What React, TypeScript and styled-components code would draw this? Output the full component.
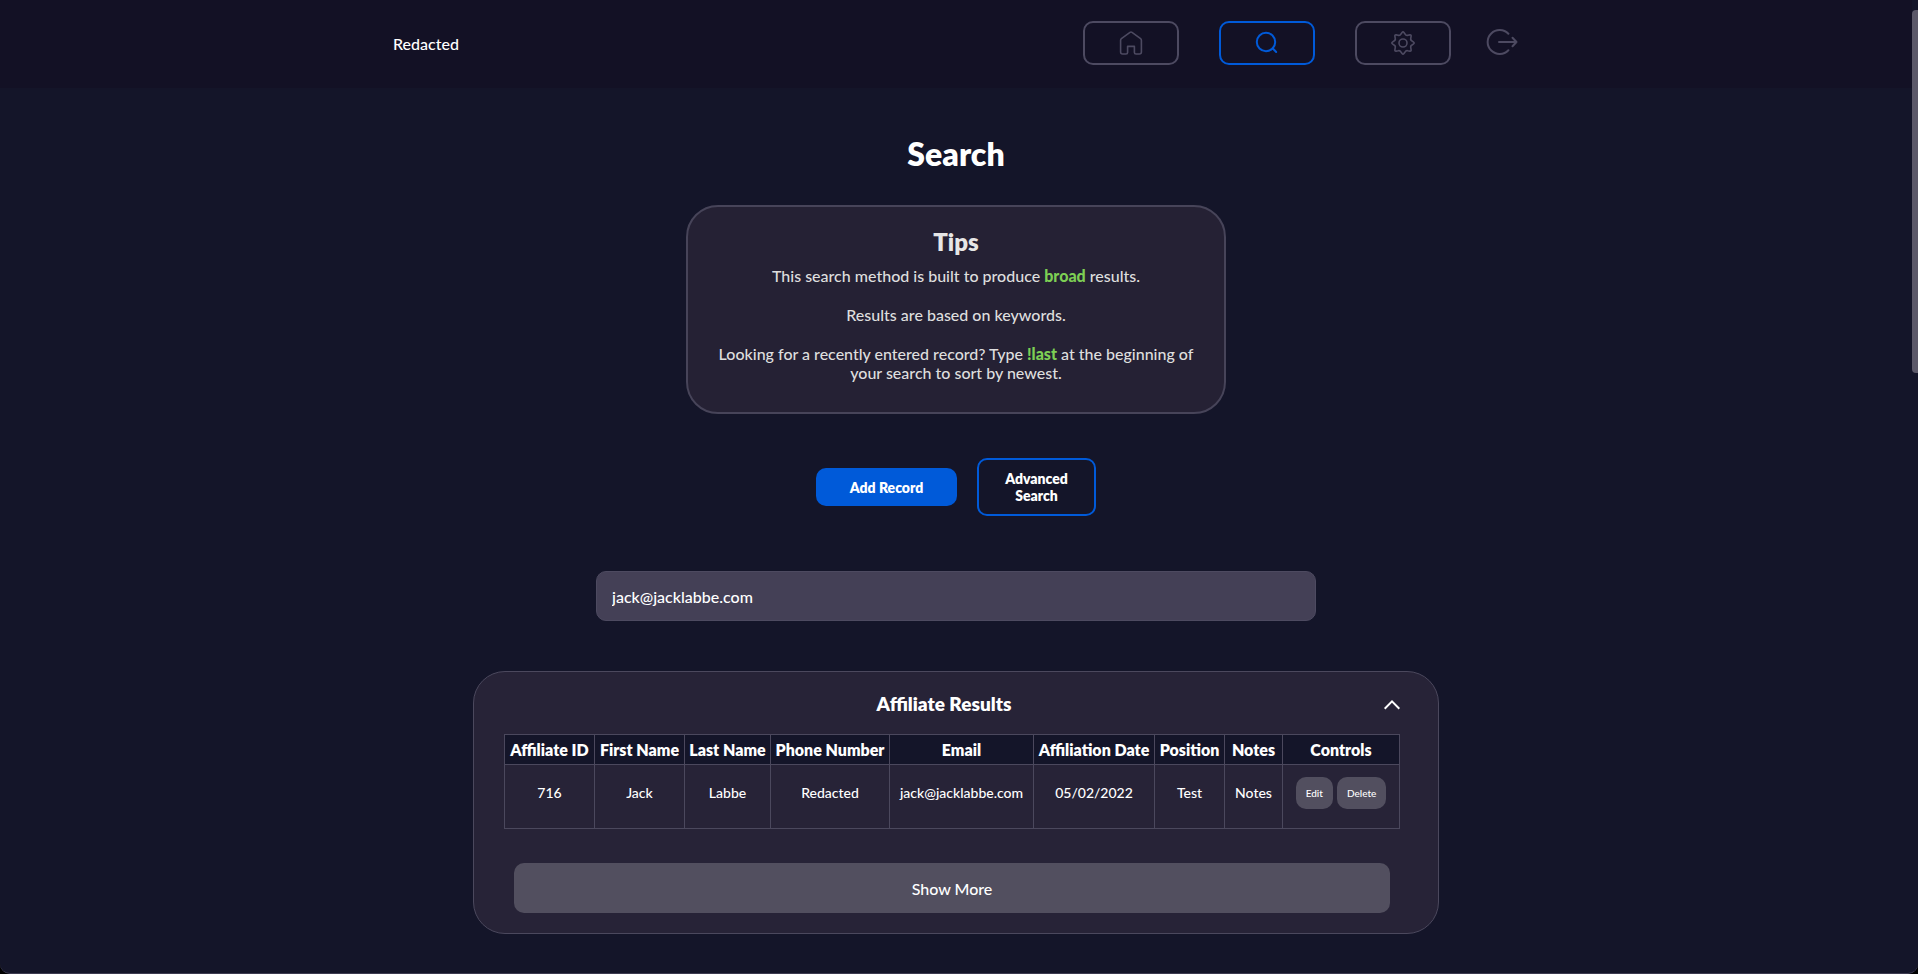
import React, { useState } from "react";
import styled, { createGlobalStyle, css } from "styled-components";

const GlobalStyle = createGlobalStyle`
  *, *::before, *::after { box-sizing: border-box; }
  body { margin: 0; background: #000; font-family: Lato, "Open Sans", sans-serif; font-weight: 500; color: #fff; }
  button, input { font-family: inherit; font-weight: inherit; color: inherit; }
  button { cursor: pointer; }
  h1, h2, h3, p { margin: 0; }
`;

const Frame = styled.div`
  display: grid;
  grid-template-columns: minmax(0, 1fr) 6px;
  min-height: 100vh;
  overflow: hidden;
  background: #141529;
  border-bottom: 1px solid #3d3b50;
  border-radius: 0 0 10px 10px;
`;

const ScrollTrack = styled.div`
  padding-top: 10px;
`;

const ScrollThumb = styled.div`
  height: 363px;
  border-radius: 4px 0 0 4px;
  background: #5c5969;
`;

const Header = styled.header`
  height: 88px;
  padding: 0 24px;
  background: #131125;
`;

const HeaderInner = styled.div`
  display: flex;
  align-items: center;
  justify-content: space-between;
  max-width: 1126px;
  height: 86px;
  margin: 0 auto;
`;

const Brand = styled.span`
  padding-top: 2px;
  font-size: 16px;
  line-height: 20px;
`;

const Nav = styled.nav`
  display: flex;
  align-items: center;
  gap: 40px;
`;

const NavLink = styled.a<{ $active?: boolean }>`
  display: flex;
  align-items: center;
  justify-content: center;
  width: 96px;
  height: 44px;
  border: 2px solid currentColor;
  border-radius: 10px;
  color: ${(p) => (p.$active ? "#005ad9" : "#4d4a61")};
`;

const LogoutButton = styled.button`
  display: flex;
  padding: 0;
  margin-left: -5px;
  border: 0;
  background: none;
  color: #4d4a61;
`;

const Main = styled.main`
  display: flex;
  flex-direction: column;
  align-items: center;
  padding: 46px 24px 36px;
`;

const PageTitle = styled.h1`
  font-size: 32px;
  line-height: 40px;
  font-weight: 800;
`;

const TipsCard = styled.section`
  width: 100%;
  max-width: 540px;
  margin-top: 31px;
  padding: 20px 24px 30px;
  border: 2px solid #474459;
  border-radius: 32px;
  background: #252134;
  color: #dedede;
  text-align: center;
`;

const TipsTitle = styled.h2`
  margin-bottom: 9px;
  font-size: 24px;
  line-height: 30px;
  font-weight: 800;
  color: #e6e6e6;
`;

const Tip = styled.p`
  font-size: 16px;
  line-height: 19px;

  & + & { margin-top: 20px; }
`;

const Keyword = styled.strong`
  line-height: 1;
  font-weight: 900;
  color: #7dcf54;
`;

const Actions = styled.div`
  display: flex;
  align-items: center;
  gap: 20px;
  margin-top: 44px;
`;

const ActionButton = styled.button<{ $outlined?: boolean }>`
  padding: 10px 20px;
  border-radius: 10px;
  font-size: 14px;
  line-height: 17px;
  font-weight: 800;
  ${(p) =>
    p.$outlined
      ? css`
          width: 119px;
          border: 2px solid #005ad9;
          background: transparent;
        `
      : css`
          width: 141px;
          height: 38px;
          border: 0;
          background: #005ad9;
        `}
`;

const SearchInput = styled.input`
  width: 100%;
  max-width: 720px;
  height: 50px;
  margin-top: 55px;
  padding: 0 15px;
  border: 1px solid #4d4a60;
  border-radius: 10px;
  background: #444056;
  font-size: 16px;
  outline: none;
`;

const ResultsCard = styled.section`
  width: 100%;
  max-width: 966px;
  margin-top: 50px;
  padding: 20px 38px 20px 30px;
  border: 1px solid #4b485d;
  border-radius: 32px;
  background: #272337;
`;

const ResultsHeader = styled.div`
  display: flex;
  align-items: center;
  margin-bottom: 18px;
`;

const ResultsTitle = styled.h3`
  flex: 1;
  font-size: 19px;
  line-height: 24px;
  font-weight: 800;
  text-align: center;
`;

const CollapseButton = styled.button`
  display: flex;
  padding: 0;
  border: 0;
  background: none;
`;

const Table = styled.table`
  width: 100%;
  border-collapse: collapse;
  table-layout: fixed;
  text-align: center;
`;

const HeadCell = styled.th<{ $w: number }>`
  width: ${(p) => p.$w}px;
  height: 30px;
  padding: 0;
  border: 1px solid #4b485d;
  background: #141529;
  font-size: 16px;
  line-height: 20px;
  font-weight: 800;
  white-space: nowrap;
`;

const Cell = styled.td`
  height: 64px;
  padding: 12px 0 19px;
  border: 1px solid #4b485d;
  font-size: 14px;
  line-height: 16px;
`;

const RowControls = styled.div`
  display: flex;
  justify-content: center;
  gap: 4px;
`;

const RowButton = styled.button`
  height: 32px;
  padding: 0 10px;
  border: 0;
  border-radius: 10px;
  background: #524f5f;
  font-size: 10px;
`;

const MoreButton = styled.button`
  display: block;
  width: calc(100% - 20px);
  height: 50px;
  margin: 34px auto 0;
  border: 0;
  border-radius: 10px;
  background: #524f5f;
  font-size: 16px;
`;

const HomeIcon = () => (
  <svg width="24" height="24" viewBox="0 0 24 24" fill="none" stroke="currentColor" strokeWidth="1.6" strokeLinejoin="round" aria-hidden="true">
    <path d="M1.6 9.2q0-1 .8-1.6L11 1.4q1-.7 2 0l8.600 6.200q.8.6.8 1.600V21q0 2-2 2H17q-1.600 0-1.600-1.600V15.400H8.600v6q0 1.600-1.600 1.600H3.600q-2 0-2-2Z" />
  </svg>
);

const SearchIcon = () => (
  <svg width="24" height="24" viewBox="0 0 24 24" fill="none" stroke="currentColor" strokeWidth="2" strokeLinecap="round" aria-hidden="true">
    <circle cx="11" cy="11" r="9.200" />
    <path d="M17.600 17.200L21.200 21" />
  </svg>
);

const toothPoint = (radius: number, degrees: number) => {
  const a = (degrees * Math.PI) / 180;
  return `${(12 + radius * Math.sin(a)).toFixed(2)} ${(12 - radius * Math.cos(a)).toFixed(2)}`;
};

const gearPath =
  `M${toothPoint(10.6, -5)}` +
  Array.from({ length: 8 }, (_, i) => {
    const t = i * 45;
    return `Q${toothPoint(11.8, t)} ${toothPoint(10.6, t + 5)}L${toothPoint(9.2, t + 13)}Q${toothPoint(7.8, t + 22.5)} ${toothPoint(9.2, t + 32)}L${toothPoint(10.6, t + 40)}`;
  }).join("") +
  "Z";

const GearIcon = () => (
  <svg width="24" height="24" viewBox="0 0 24 24" fill="none" stroke="currentColor" strokeWidth="1.6" strokeLinejoin="round" aria-hidden="true">
    <path d={gearPath} />
    <circle cx="12" cy="12" r="4" />
  </svg>
);

const LogoutIcon = () => (
  <svg width="33" height="28" viewBox="0 1 33 28" fill="none" stroke="currentColor" strokeWidth="2" strokeLinecap="round" strokeLinejoin="round" aria-hidden="true">
    <path d="M22.400 5.800A12 12 0 1 0 22.400 22.200" />
    <path d="M13 14H30.500M26.500 9.800L30.500 14L26.500 18.200" />
  </svg>
);

const ChevronIcon = () => (
  <svg width="16" height="24" viewBox="0 0 16 24" fill="none" stroke="currentColor" strokeWidth="2" aria-hidden="true">
    <path d="M.7 16.700L8 9.400L15.300 16.700" />
  </svg>
);

const columns = [
  { label: "Affiliate ID", width: 90 },
  { label: "First Name", width: 90 },
  { label: "Last Name", width: 86 },
  { label: "Phone Number", width: 119 },
  { label: "Email", width: 144 },
  { label: "Affiliation Date", width: 121 },
  { label: "Position", width: 70 },
  { label: "Notes", width: 58 },
  { label: "Controls", width: 117 },
];

const record = ["716", "Jack", "Labbe", "Redacted", "jack@jacklabbe.com", "05/02/2022", "Test", "Notes"];

export default function App() {
  const [query, setQuery] = useState("jack@jacklabbe.com");

  return (
    <>
      <GlobalStyle />
      <Frame>
        <div>
          <Header>
            <HeaderInner>
              <Brand>Redacted</Brand>
              <Nav>
                <NavLink href="#home" aria-label="Home"><HomeIcon /></NavLink>
                <NavLink href="#search" aria-label="Search" $active><SearchIcon /></NavLink>
                <NavLink href="#settings" aria-label="Settings"><GearIcon /></NavLink>
                <LogoutButton type="button" aria-label="Log out"><LogoutIcon /></LogoutButton>
              </Nav>
            </HeaderInner>
          </Header>
          <Main>
            <PageTitle>Search</PageTitle>
            <TipsCard>
              <TipsTitle>Tips</TipsTitle>
              <Tip>This search method is built to produce <Keyword>broad</Keyword> results.</Tip>
              <Tip>Results are based on keywords.</Tip>
              <Tip>
                Looking for a recently entered record? Type <Keyword>!last</Keyword> at the beginning of your search to
                sort by newest.
              </Tip>
            </TipsCard>
            <Actions>
              <ActionButton type="button">Add Record</ActionButton>
              <ActionButton type="button" $outlined>Advanced Search</ActionButton>
            </Actions>
            <SearchInput type="text" aria-label="Search records" value={query} onChange={(e) => setQuery(e.target.value)} />
            <ResultsCard>
              <ResultsHeader>
                <ResultsTitle>Affiliate Results</ResultsTitle>
                <CollapseButton type="button" aria-label="Collapse results"><ChevronIcon /></CollapseButton>
              </ResultsHeader>
              <Table>
                <thead>
                  <tr>
                    {columns.map((c) => (
                      <HeadCell key={c.label} scope="col" $w={c.width}>{c.label}</HeadCell>
                    ))}
                  </tr>
                </thead>
                <tbody>
                  <tr>
                    {record.map((value, i) => (
                      <Cell key={columns[i].label}>{value}</Cell>
                    ))}
                    <Cell>
                      <RowControls>
                        <RowButton type="button">Edit</RowButton>
                        <RowButton type="button">Delete</RowButton>
                      </RowControls>
                    </Cell>
                  </tr>
                </tbody>
              </Table>
              <MoreButton type="button">Show More</MoreButton>
            </ResultsCard>
          </Main>
        </div>
        <ScrollTrack><ScrollThumb /></ScrollTrack>
      </Frame>
    </>
  );
}
